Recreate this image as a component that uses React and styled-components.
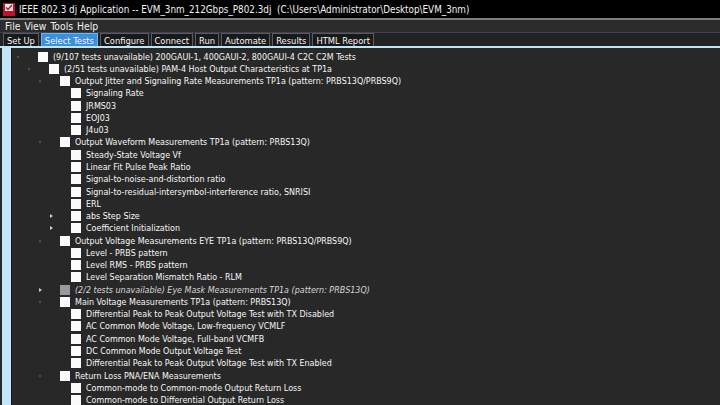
import React from 'react';
import styled, { createGlobalStyle } from 'styled-components';

const GlobalStyle = createGlobalStyle`
  html, body {
    margin: 0;
    padding: 0;
    background: #282828;
    overflow: hidden;
  }
`;

const Window = styled.div`
  width: 720px;
  height: 405px;
  display: flex;
  flex-direction: column;
  background: #282828;
  font-family: "DejaVu Sans Condensed", "DejaVu Sans", sans-serif;
  color: #f2f2f2;
  overflow: hidden;
`;

const TitleBar = styled.div`
  height: 18px;
  flex-shrink: 0;
  display: flex;
  align-items: center;
  gap: 4px;
  padding-left: 3px;
  background: #000;
  border-bottom: 2px solid #7d7d7d;
  font-size: 9.8px;
  white-space: pre;
`;

const MenuBar = styled.div`
  height: 12px;
  flex-shrink: 0;
  display: flex;
  align-items: center;
  gap: 4px;
  padding-left: 5px;
  background: #2c2c2c;
  border-bottom: 1px solid #3a4656;
  font-size: 10.3px;
`;

const TabStrip = styled.div`
  height: 13px;
  flex-shrink: 0;
  display: flex;
  align-items: stretch;
  gap: 2px;
  padding-left: 3px;
  background: #232323;
`;

const Tab = styled.div`
  display: flex;
  align-items: center;
  padding: 0 3px;
  font-size: 9.3px;
  background: ${(p) => (p.$active ? '#3b8fdf' : '#191919')};
  border: 1px solid ${(p) => (p.$active ? '#6fb3f0' : '#5c5c5c')};
  border-bottom: none;
  color: #f4f4f4;
`;

const Page = styled.div`
  flex: 1;
  min-height: 0;
  display: flex;
  border-top: 2px solid #bfe4f8;
  overflow: hidden;
`;

const SideStrip = styled.div`
  width: 9px;
  margin-left: 2px;
  background: #c2e5f8;
  border-right: 1px solid #151515;
`;

const Tree = styled.div`
  flex: 1;
  padding-top: 2.5px;
  background: #282828;
`;

const Row = styled.div`
  height: 12.27px;
  display: flex;
  align-items: center;
  padding-left: ${(p) => p.$level * 11}px;
  font-size: 8.9px;
  white-space: nowrap;
  color: ${(p) => (p.$disabled ? '#d6d6d6' : '#f6f6f6')};
  font-style: ${(p) => (p.$disabled ? 'italic' : 'normal')};
`;

const Expander = styled.span`
  width: 12px;
  display: flex;
  justify-content: center;
  align-items: center;
  margin-right: 14px;
`;

const Dot = styled.span`
  width: 2px;
  height: 2px;
  background: #4e4e4e;
`;

const Arrow = styled.span`
  width: 0;
  height: 0;
  border-top: 2.5px solid transparent;
  border-bottom: 2.5px solid transparent;
  border-left: 3px solid #cfcfcf;
`;

const Box = styled.span`
  width: 10px;
  height: 10px;
  flex-shrink: 0;
  margin-right: 5px;
  background: ${(p) => (p.$disabled ? '#9a9a9a' : '#fbfbfb')};
`;

const Logo = () => (
  <svg width="12" height="13" viewBox="0 0 12 13">
    <rect x="0" y="0" width="12" height="13" fill="#c0112c" />
    <rect x="2" y="1" width="8" height="7" fill="#e8e8e8" />
    <path d="M3 4.5 L5 6.5 L9 2" stroke="#c0112c" strokeWidth="1.4" fill="none" />
  </svg>
);

const tabs = ['Set Up', 'Select Tests', 'Configure', 'Connect', 'Run', 'Automate', 'Results', 'HTML Report'];

// [level, text, expander: 'dot' | 'arrow' | null, disabled]
const rows = [
  [0, '(9/107 tests unavailable) 200GAUI-1, 400GAUI-2, 800GAUI-4 C2C C2M Tests', 'dot'],
  [1, '(2/51 tests unavailable) PAM-4 Host Output Characteristics at TP1a', 'dot'],
  [2, 'Output Jitter and Signaling Rate Measurements TP1a (pattern: PRBS13Q/PRBS9Q)', 'dot'],
  [3, 'Signaling Rate'],
  [3, 'JRMS03'],
  [3, 'EOJ03'],
  [3, 'J4u03'],
  [2, 'Output Waveform Measurements TP1a (pattern: PRBS13Q)', 'dot'],
  [3, 'Steady-State Voltage Vf'],
  [3, 'Linear Fit Pulse Peak Ratio'],
  [3, 'Signal-to-noise-and-distortion ratio'],
  [3, 'Signal-to-residual-intersymbol-interference ratio, SNRISI'],
  [3, 'ERL'],
  [3, 'abs Step Size', 'arrow'],
  [3, 'Coefficient Initialization', 'arrow'],
  [2, 'Output Voltage Measurements EYE TP1a (pattern: PRBS13Q/PRBS9Q)', 'dot'],
  [3, 'Level - PRBS pattern'],
  [3, 'Level RMS - PRBS pattern'],
  [3, 'Level Separation Mismatch Ratio - RLM'],
  [2, '(2/2 tests unavailable) Eye Mask Measurements TP1a (pattern: PRBS13Q)', 'arrow', true],
  [2, 'Main Voltage Measurements TP1a (pattern: PRBS13Q)', 'dot'],
  [3, 'Differential Peak to Peak Output Voltage Test with TX Disabled'],
  [3, 'AC Common Mode Voltage, Low-frequency VCMLF'],
  [3, 'AC Common Mode Voltage, Full-band VCMFB'],
  [3, 'DC Common Mode Output Voltage Test'],
  [3, 'Differential Peak to Peak Output Voltage Test with TX Enabled'],
  [2, 'Return Loss PNA/ENA Measurements', 'dot'],
  [3, 'Common-mode to Common-mode Output Return Loss'],
  [3, 'Common-mode to Differential Output Return Loss'],
];

export default function App() {
  return (
    <Window>
      <GlobalStyle />
      <TitleBar>
        <Logo />
        <span>IEEE 802.3 dj Application -- EVM_3nm_212Gbps_P802.3dj  (C:\Users\Administrator\Desktop\EVM_3nm)</span>
      </TitleBar>
      <MenuBar>
        <span>File</span>
        <span>View</span>
        <span>Tools</span>
        <span>Help</span>
      </MenuBar>
      <TabStrip>
        {tabs.map((t) => (
          <Tab key={t} $active={t === 'Select Tests'}>{t}</Tab>
        ))}
      </TabStrip>
      <Page>
        <SideStrip />
        <Tree>
          {rows.map(([level, text, exp, disabled], i) => (
            <Row key={i} $level={level} $disabled={disabled}>
              <Expander>
                {exp === 'dot' && <Dot />}
                {exp === 'arrow' && <Arrow />}
              </Expander>
              <Box $disabled={disabled} />
              <span>{text}</span>
            </Row>
          ))}
        </Tree>
      </Page>
    </Window>
  );
}
